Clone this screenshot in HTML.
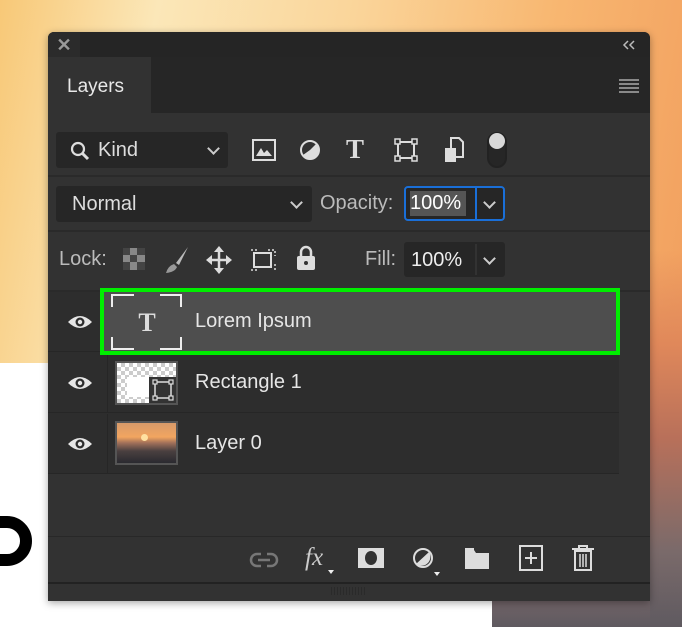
<!DOCTYPE html>
<html><head><style>
*{margin:0;padding:0;box-sizing:border-box}
body{width:682px;height:627px;overflow:hidden;position:relative;font-family:"Liberation Sans",sans-serif;
background:linear-gradient(100deg,#f8c877 0%,#fbe7b8 20%,#fad59a 45%,#f8b771 70%,#f09a5a 100%);}
.white{position:absolute;left:0;top:363px;width:495px;height:264px;background:#fff}
.grey{position:absolute;left:492px;top:560px;width:190px;height:67px;background:linear-gradient(180deg,#8a7070,#5f5a60)}
.rstrip{position:absolute;left:650px;top:250px;width:32px;height:377px;background:linear-gradient(180deg,rgba(240,154,90,0),#e0885a 25%,#b8705a 50%,#7a6a6a 80%,#5f5a60)}
.D{position:absolute;left:-30px;top:516px;width:62px;height:50px;border:12px solid #000;border-radius:25px}
.panel{position:absolute;left:48px;top:32px;width:602px;height:569px;background:#323232;border-radius:6px 6px 0 0;box-shadow:0 2px 8px rgba(0,0,0,.35);overflow:hidden;color:#ddd}
.abs{position:absolute}
.tb{left:0;top:0;width:602px;height:25px;background:#252525}
.tabrow{left:0;top:25px;width:602px;height:56px;background:#262626}
.tab{left:0;top:25px;width:103px;height:56px;background:#323232;font-size:19px;color:#e8e8e8;padding:19px 0 0 19px}
.sep{left:0;width:602px;height:2px;background:#2a2a2a}
.box{border:2px solid #262626;background:#262626;border-radius:3px;color:#ddd;font-size:20px}
.chev{width:9px;height:9px;border-right:2px solid #ccc;border-bottom:2px solid #ccc;transform:rotate(45deg)}
.list{left:0;top:258px;width:571px;height:183px;background:#2d2d2d}
.row{left:0;width:571px;height:60px;border-bottom:1px solid #262626}
.eyecol{left:0;width:60px;height:100%;border-right:1px solid #262626}
.lbl{font-size:20px;color:#e6e6e6}
.foot{left:0;top:504px;width:602px;height:48px;background:#323232;border-top:1px solid #282828;border-bottom:2px solid #222}
</style></head><body>
<div class="white"></div><div class="grey"></div><div class="rstrip"></div><div class="D"></div>
<div class="panel">
 <div class="abs tb"></div>
 <div class="abs" style="left:0;top:0;width:32px;height:25px;background:#2b2b2b;color:#9a9a9a;font-size:18px;font-weight:bold;text-align:center;line-height:26px">✕</div>
 <svg class="abs" style="left:574px;top:8px" width="14" height="10"><path d="M6 1 L2 5 L6 9 M12 1 L8 5 L12 9" fill="none" stroke="#bbb" stroke-width="1.5"/></svg>
 <div class="abs tabrow"></div>
 <div class="abs tab">Layers</div>
 <svg class="abs" style="left:571px;top:47px" width="20" height="14"><g stroke="#aaa" stroke-width="1.5"><line x1="0" y1="1" x2="20" y2="1"/><line x1="0" y1="5" x2="20" y2="5"/><line x1="0" y1="9" x2="20" y2="9"/><line x1="0" y1="13" x2="20" y2="13"/></g></svg>

 <div class="abs box" style="left:8px;top:100px;width:172px;height:36px;padding:5px 0 0 40px">Kind</div>
 <svg class="abs" style="left:22px;top:109px" width="20" height="20"><circle cx="8" cy="8" r="6" fill="none" stroke="#ddd" stroke-width="2.2"/><line x1="12" y1="12" x2="18" y2="18" stroke="#ddd" stroke-width="3"/></svg>
 <div class="abs chev" style="left:161px;top:112px"></div>
 <svg class="abs" style="left:204px;top:107px" width="24" height="22"><rect x="1" y="1" width="22" height="20" fill="none" stroke="#ddd" stroke-width="2"/><path d="M4 17 L9 9 L12 14 L15 11 L20 17Z" fill="#ddd"/></svg>
 <svg class="abs" style="left:251px;top:107px" width="22" height="22"><circle cx="11" cy="11" r="9" fill="none" stroke="#ddd" stroke-width="2"/><path d="M11 11 L17 5 A9 9 0 0 1 11 20 A9 9 0 0 1 4 16Z" fill="#ddd"/></svg>
 <div class="abs" style="left:298px;top:102px;font-family:'Liberation Serif',serif;font-size:27px;color:#ddd;font-weight:bold">T</div>
 <svg class="abs" style="left:346px;top:106px" width="24" height="24"><rect x="4" y="4" width="16" height="16" fill="none" stroke="#ddd" stroke-width="2"/><g fill="#323232" stroke="#ddd" stroke-width="1.5"><rect x="1" y="1" width="5" height="5"/><rect x="18" y="1" width="5" height="5"/><rect x="1" y="18" width="5" height="5"/><rect x="18" y="18" width="5" height="5"/></g></svg>
 <svg class="abs" style="left:396px;top:105px" width="20" height="26"><path d="M7 1 H15 L19 5 V20 H7Z" fill="none" stroke="#ddd" stroke-width="2"/><rect x="1" y="11" width="11" height="14" fill="#ddd"/></svg>
 <div class="abs" style="left:439px;top:100px;width:20px;height:36px;border:2px solid #222;border-radius:10px;background:#262626"></div>
 <div class="abs" style="left:441px;top:101px;width:16px;height:16px;border-radius:8px;background:#d8d8d8"></div>
 <div class="abs sep" style="top:143px"></div>

 <div class="abs box" style="left:8px;top:154px;width:256px;height:36px;padding:5px 0 0 14px">Normal</div>
 <div class="abs chev" style="left:244px;top:166px"></div>
 <div class="abs" style="left:272px;top:160px;font-size:20px;color:#bbb">Opacity:</div>
 <div class="abs" style="left:356px;top:154px;width:101px;height:35px;border:2px solid #1a6fd8;border-radius:4px;background:#262626"></div>
 <div class="abs" style="left:427px;top:156px;width:2px;height:31px;background:#1a6fd8"></div>
 <div class="abs" style="left:362px;top:159px;width:56px;height:25px;background:#555;font-size:20px;color:#fff;padding:1px 0 0 0">100%</div>
 <div class="abs chev" style="left:437px;top:166px"></div>
 <div class="abs sep" style="top:198px"></div>

 <div class="abs" style="left:11px;top:216px;font-size:20px;color:#bbb">Lock:</div>
 <svg class="abs" style="left:75px;top:216px" width="22" height="22"><rect x="0" y="0" width="22" height="22" fill="#888"/><g fill="#444"><rect x="0" y="0" width="7" height="7"/><rect x="14" y="0" width="8" height="7"/><rect x="7" y="7" width="7" height="7"/><rect x="0" y="14" width="7" height="8"/><rect x="14" y="14" width="8" height="8"/></g></svg>
 <svg class="abs" style="left:116px;top:214px" width="26" height="28"><path d="M24 1 L12 17 L15 19Z" fill="#bbb"/><path d="M10 18 Q4 20 2 27 Q11 26 13 21Z" fill="#999"/></svg>
 <svg class="abs" style="left:158px;top:214px" width="26" height="28"><g stroke="#ddd" stroke-width="2.5" fill="#ddd"><line x1="13" y1="3" x2="13" y2="25"/><line x1="2" y1="14" x2="24" y2="14"/></g><g fill="#ddd"><path d="M13 0 L8 6 H18Z"/><path d="M13 28 L8 22 H18Z"/><path d="M0 14 L6 9 V19Z"/><path d="M26 14 L20 9 V19Z"/></g></svg>
 <svg class="abs" style="left:201px;top:214px" width="28" height="26"><rect x="5" y="7" width="17" height="14" fill="none" stroke="#ddd" stroke-width="2"/><path d="M2 4 H9 M19 4 H26 V10 M26 18 V24 M2 24 H9" stroke="#ddd" stroke-width="1.5" stroke-dasharray="2 2" fill="none"/></svg>
 <svg class="abs" style="left:248px;top:213px" width="20" height="26"><path d="M5 11 V7 A5 5 0 0 1 15 7 V11" fill="none" stroke="#ddd" stroke-width="2.5"/><rect x="1" y="11" width="18" height="14" rx="2" fill="#ddd"/><circle cx="10" cy="18" r="2" fill="#323232"/></svg>
 <div class="abs" style="left:317px;top:216px;font-size:20px;color:#bbb">Fill:</div>
 <div class="abs box" style="left:356px;top:210px;width:101px;height:35px;padding:5px 0 0 5px;color:#eee">100%</div>
 <div class="abs" style="left:427px;top:212px;width:2px;height:31px;background:#323232"></div>
 <div class="abs chev" style="left:437px;top:222px"></div>

 <div class="abs list"></div>
 <div class="abs" style="left:0;top:258px;width:602px;height:2px;background:#2a2a2a"></div>
 <div class="abs row" style="top:260px;background:#2d2d2d"><div class="abs eyecol"></div></div>
 <div class="abs row" style="top:321px"><div class="abs eyecol"></div></div>
 <div class="abs row" style="top:382px"><div class="abs eyecol"></div></div>
 <div class="abs" style="left:52px;top:256px;width:520px;height:67px;background:#4e4e4e;border:4px solid #00ee00"></div>
 <svg class="abs" style="left:63px;top:262px" width="72" height="56"><g fill="none" stroke="#eee" stroke-width="2"><path d="M1 13 V1 H23"/><path d="M49 1 H70 V13"/><path d="M1 43 V55 H23"/><path d="M49 55 H70 V43"/></g><text x="36" y="37" text-anchor="middle" font-family="Liberation Serif,serif" font-size="26" font-weight="bold" fill="#ddd">T</text></svg>
 <div class="abs lbl" style="left:147px;top:278px">Lorem Ipsum</div>
 <div class="abs" style="left:67px;top:329px;width:63px;height:44px;border:2px solid #555;background-color:#fff;background-image:linear-gradient(45deg,#ccc 25%,transparent 25%,transparent 75%,#ccc 75%),linear-gradient(45deg,#ccc 25%,transparent 25%,transparent 75%,#ccc 75%);background-size:8px 8px;background-position:0 0,4px 4px"></div>
 <div class="abs" style="left:79px;top:345px;width:22px;height:20px;background:#fff"></div>
 <div class="abs" style="left:101px;top:345px;width:27px;height:26px;background:#333"></div>
 <svg class="abs" style="left:104px;top:347px" width="22" height="22"><rect x="3" y="3" width="16" height="16" fill="none" stroke="#ddd" stroke-width="1.5"/><g fill="#333" stroke="#ddd" stroke-width="1.2"><rect x="1" y="1" width="4" height="4"/><rect x="17" y="1" width="4" height="4"/><rect x="1" y="17" width="4" height="4"/><rect x="17" y="17" width="4" height="4"/></g></svg>
 <div class="abs lbl" style="left:147px;top:339px">Rectangle 1</div>
 <div class="abs" style="left:67px;top:389px;width:63px;height:44px;border:2px solid #555;background:linear-gradient(180deg,#d79a6a 0%,#f2a560 35%,#a0705a 50%,#4a4040 70%,#2a2a30 100%)"></div>
 <div class="abs" style="left:93px;top:402px;width:7px;height:7px;border-radius:50%;background:#ffe0a0"></div>
 <div class="abs lbl" style="left:147px;top:400px">Layer 0</div>
 <svg class="abs" style="left:19px;top:282px" width="26" height="180"><g fill="#e6e6e6"><path d="M1 8 Q13 -4 25 8 Q13 20 1 8Z"/><path d="M1 69 Q13 57 25 69 Q13 81 1 69Z"/><path d="M1 130 Q13 118 25 130 Q13 142 1 130Z"/></g><g fill="#2d2d2d"><circle cx="13" cy="8" r="4.5"/><circle cx="13" cy="69" r="4.5"/><circle cx="13" cy="130" r="4.5"/></g><g fill="#e6e6e6"><circle cx="13" cy="8" r="2.2"/><circle cx="13" cy="69" r="2.2"/><circle cx="13" cy="130" r="2.2"/></g></svg>

 <div class="abs foot"></div>
 <svg class="abs" style="left:201px;top:518px" width="30" height="20"><g fill="none" stroke="#777" stroke-width="2.5"><path d="M12 4 H8 A6 6 0 0 0 8 16 H12"/><path d="M18 4 H22 A6 6 0 0 1 22 16 H18"/><line x1="9" y1="10" x2="21" y2="10"/></g></svg>
 <div class="abs" style="left:257px;top:512px;font-family:'Liberation Serif',serif;font-style:italic;font-size:25px;color:#ccc">fx</div>
 <div class="abs" style="left:280px;top:538px;width:0;height:0;border-left:3px solid transparent;border-right:3px solid transparent;border-top:4px solid #eee"></div>
 <svg class="abs" style="left:310px;top:516px" width="26" height="20"><rect width="26" height="20" fill="#ddd"/><ellipse cx="13" cy="10" rx="6" ry="7" fill="#323232"/></svg>
 <svg class="abs" style="left:364px;top:515px" width="22" height="22"><circle cx="11" cy="11" r="9" fill="none" stroke="#ddd" stroke-width="2"/><path d="M17 5 A9 9 0 0 1 4 17Z" fill="#ddd"/></svg>
 <div class="abs" style="left:386px;top:540px;width:0;height:0;border-left:3px solid transparent;border-right:3px solid transparent;border-top:4px solid #eee"></div>
 <svg class="abs" style="left:416px;top:515px" width="26" height="23"><path d="M1 3 H10 L12 6 H25 V22 H1Z" fill="#ddd"/><rect x="1" y="1" width="9" height="3" fill="#ddd"/></svg>
 <svg class="abs" style="left:471px;top:513px" width="24" height="26"><rect x="1" y="1" width="22" height="24" fill="none" stroke="#ddd" stroke-width="2"/><path d="M12 7 V19 M6 13 H18" stroke="#ddd" stroke-width="2"/></svg>
 <svg class="abs" style="left:523px;top:512px" width="24" height="28"><path d="M1 5 H23 M8 5 V2 H16 V5" fill="none" stroke="#ddd" stroke-width="2"/><rect x="4" y="7" width="16" height="19" fill="none" stroke="#ddd" stroke-width="2"/><path d="M9 10 V23 M12 10 V23 M15 10 V23" stroke="#ddd" stroke-width="1.5"/></svg>
 <div class="abs" style="left:283px;top:555px;width:36px;height:8px;background:repeating-linear-gradient(90deg,#2a2a2a 0 1px,transparent 1px 3px)"></div>
</div>
</body></html>
